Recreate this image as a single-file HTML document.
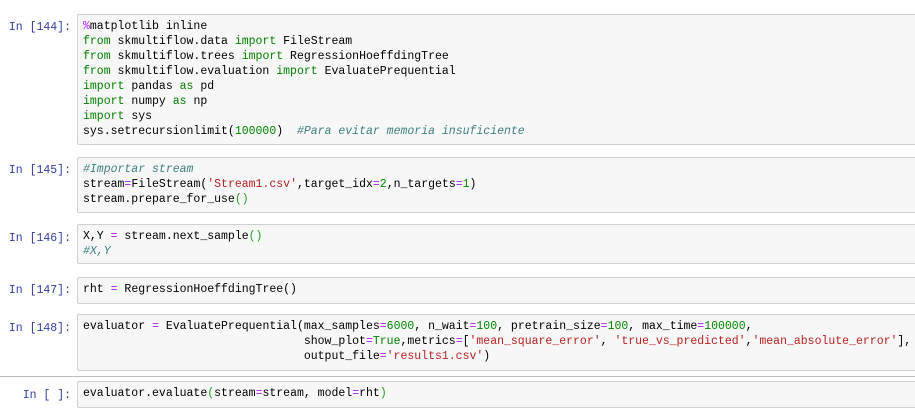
<!DOCTYPE html>
<html><head><meta charset="utf-8"><style>
body{margin:0;width:915px;height:412px;background:#fff;position:relative;overflow:hidden;font-family:"Liberation Mono",monospace;font-size:11.5px;}
.p{position:absolute;left:0;width:71px;text-align:right;color:#303F9F;line-height:15px;white-space:pre}
.c{position:absolute;left:77px;width:850px;background:#f7f7f7;border:1px solid #cfcfcf;border-radius:2px;box-sizing:border-box;padding:4px 0 0 5px;line-height:15px;white-space:pre;color:#000}
.k{color:#008000}.m{color:#AA22FF}.o{color:#AA22FF}.n{color:#008800}.s{color:#BA2121}.cm{color:#408080;font-style:italic}.g{color:#2a9a2a}
.sel{position:absolute;left:0;top:376px;width:915px;height:1px;background:#bdbdbd}
</style></head><body>
<div class="p" style="top:20px">In [144]:</div>
<div class="c" style="top:14px;height:131px"><span class="m">%</span>matplotlib inline
<span class="k">from</span> skmultiflow.data <span class="k">import</span> FileStream
<span class="k">from</span> skmultiflow.trees <span class="k">import</span> RegressionHoeffdingTree
<span class="k">from</span> skmultiflow.evaluation <span class="k">import</span> EvaluatePrequential
<span class="k">import</span> pandas <span class="k">as</span> pd
<span class="k">import</span> numpy <span class="k">as</span> np
<span class="k">import</span> sys
sys.setrecursionlimit(<span class="n">100000</span>)  <span class="cm">#Para evitar memoria insuficiente</span></div>

<div class="p" style="top:163px">In [145]:</div>
<div class="c" style="top:157px;height:56px"><span class="cm">#Importar stream</span>
stream<span class="o">=</span>FileStream(<span class="s">'Stream1.csv'</span>,target_idx<span class="o">=</span><span class="n">2</span>,n_targets<span class="o">=</span><span class="n">1</span>)
stream.prepare_for_use<span class="g">()</span></div>

<div class="p" style="top:231px">In [146]:</div>
<div class="c" style="top:224px;height:40px">X,Y <span class="o">=</span> stream.next_sample<span class="g">()</span>
<span class="cm">#X,Y</span></div>

<div class="p" style="top:283px">In [147]:</div>
<div class="c" style="top:277px;height:27px">rht <span class="o">=</span> RegressionHoeffdingTree()</div>

<div class="p" style="top:321px">In [148]:</div>
<div class="c" style="top:314px;height:57px">evaluator <span class="o">=</span> EvaluatePrequential(max_samples<span class="o">=</span><span class="n">6000</span>, n_wait<span class="o">=</span><span class="n">100</span>, pretrain_size<span class="o">=</span><span class="n">100</span>, max_time<span class="o">=</span><span class="n">100000</span>,
                                show_plot<span class="o">=</span><span class="k">True</span>,metrics<span class="o">=</span>[<span class="s">'mean_square_error'</span>, <span class="s">'true_vs_predicted'</span>,<span class="s">'mean_absolute_error'</span>],
                                output_file<span class="o">=</span><span class="s">'results1.csv'</span>)</div>

<div class="sel"></div>
<div class="p" style="top:388px">In [ ]:</div>
<div class="c" style="top:381px;height:27px">evaluator.evaluate<span class="g">(</span>stream<span class="o">=</span>stream, model<span class="o">=</span>rht<span class="g">)</span></div>
</body></html>
